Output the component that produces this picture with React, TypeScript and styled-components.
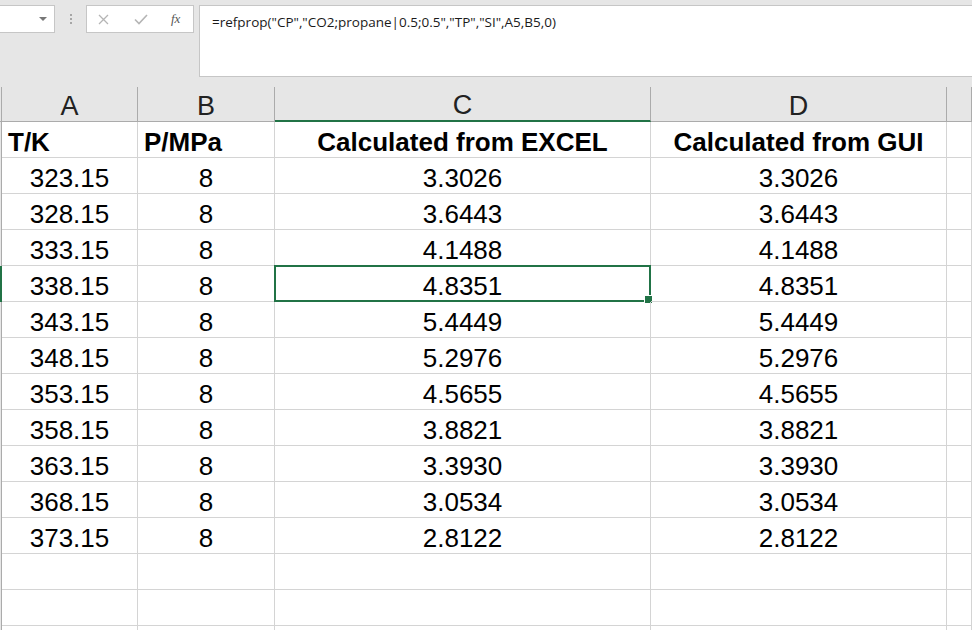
import React from "react";
import styled, { createGlobalStyle, css } from "styled-components";

const GlobalStyle = createGlobalStyle`
  html, body {
    margin: 0;
    padding: 0;
    background: #ffffff;
    overflow: hidden;
  }
  * {
    box-sizing: border-box;
  }
`;

const GRID_LINE = "#d4d4d4";
const HEADER_LINE = "#ababab";
const EXCEL_GREEN = "#217346";

const Window = styled.div`
  display: flex;
  flex-direction: column;
  height: 100vh;
  overflow: hidden;
`;

const FormulaBar = styled.div`
  display: flex;
  flex-direction: row;
  align-items: flex-start;
  flex-shrink: 0;
  height: 87px;
  padding-top: 5px;
  background: #e6e6e6;
`;

const NameBox = styled.div`
  display: flex;
  align-items: center;
  justify-content: flex-end;
  width: 55px;
  height: 28px;
  padding-right: 7px;
  background: #fff;
  border: 1px solid #c6c6c6;
  border-left: 0;
`;

const Caret = styled.span`
  width: 0;
  height: 0;
  border-left: 4px solid transparent;
  border-right: 4px solid transparent;
  border-top: 4px solid #777;
`;

const Grip = styled.div`
  display: flex;
  flex-direction: column;
  row-gap: 2px;
  margin: 9px 14px 0 15px;
  span {
    width: 2px;
    height: 2px;
    background: #a6a6a6;
  }
`;

const ButtonBox = styled.div`
  display: flex;
  align-items: center;
  width: 108px;
  height: 28px;
  padding-left: 11px;
  column-gap: 25px;
  background: #fff;
  border: 1px solid #c6c6c6;
`;

const Fx = styled.span`
  font-family: "Liberation Serif", serif;
  font-style: italic;
  font-size: 13px;
  color: #555;
  margin-left: -2px;
`;

const FormulaInput = styled.div`
  flex: 1;
  height: 72px;
  margin-left: 5px;
  padding: 7px 0 0 12px;
  background: #fff;
  border: 1px solid #c6c6c6;
  border-right: 0;
  font-family: "Open Sans", "Noto Sans", sans-serif;
  font-size: 13.5px;
  color: #1a1a1a;
  white-space: pre;
`;

const Sheet = styled.div`
  flex: 1;
  min-height: 0;
  overflow: hidden;
  display: grid;
  grid-template-columns: 2px 136px 137px 376px 296px 1fr;
  grid-auto-rows: 36px;
  grid-template-rows: 35px;
  align-content: start;
  font-family: "Liberation Sans", Arial, sans-serif;
`;

const RowHead = styled.div<{ $selected?: boolean; $top?: boolean }>`
  background: #e6e6e6;
  border-right: 1px solid ${HEADER_LINE};
  ${p => p.$top && css`border-bottom: 1px solid ${HEADER_LINE};`}
  ${p => p.$selected && css`background: ${EXCEL_GREEN}; border-right-color: ${EXCEL_GREEN};`}
`;

const ColHead = styled.div<{ $selected?: boolean }>`
  display: flex;
  align-items: flex-end;
  justify-content: center;
  background: #e6e6e6;
  border-right: 1px solid ${HEADER_LINE};
  border-bottom: 1px solid ${HEADER_LINE};
  font-size: 27px;
  line-height: 30px;
  color: #222;
  ${p => p.$selected && css`border-bottom: 2px solid ${EXCEL_GREEN};`}
`;

const Cell = styled.div<{ $align?: "left" | "center"; $bold?: boolean }>`
  position: relative;
  display: flex;
  align-items: flex-end;
  justify-content: ${p => (p.$align === "left" ? "flex-start" : "center")};
  padding: 0 0 0 ${p => (p.$align === "left" ? "6px" : "0")};
  border-right: 1px solid ${GRID_LINE};
  border-bottom: 1px solid ${GRID_LINE};
  font-size: 26px;
  font-weight: ${p => (p.$bold ? 700 : 400)};
  line-height: 30px;
  color: #000;
  white-space: nowrap;
`;

const Selection = styled.div`
  position: absolute;
  left: -1px;
  top: -1px;
  right: -1px;
  bottom: -1px;
  border: 2px solid ${EXCEL_GREEN};
  pointer-events: none;
  &::after {
    content: "";
    position: absolute;
    right: -4px;
    bottom: -4px;
    width: 7px;
    height: 7px;
    background: ${EXCEL_GREEN};
    border: 1px solid #fff;
  }
`;

const CloseIcon = () => (
  <svg width="11" height="11" viewBox="0 0 11 11">
    <path d="M1 1 L10 10 M10 1 L1 10" stroke="#b5b5b5" strokeWidth="1.3" fill="none" />
  </svg>
);

const CheckIcon = () => (
  <svg width="14" height="11" viewBox="0 0 14 11">
    <path d="M1 5.5 L5 9.5 L13 1" stroke="#b5b5b5" strokeWidth="1.6" fill="none" />
  </svg>
);

const data: [string, string][] = [
  ["323.15", "3.3026"],
  ["328.15", "3.6443"],
  ["333.15", "4.1488"],
  ["338.15", "4.8351"],
  ["343.15", "5.4449"],
  ["348.15", "5.2976"],
  ["353.15", "4.5655"],
  ["358.15", "3.8821"],
  ["363.15", "3.3930"],
  ["368.15", "3.0534"],
  ["373.15", "2.8122"],
];

const SELECTED_ROW = 3;

const App = () => {
  return (
    <Window>
      <GlobalStyle />
      <FormulaBar>
        <NameBox>
          <Caret />
        </NameBox>
        <Grip>
          <span />
          <span />
          <span />
        </Grip>
        <ButtonBox>
          <CloseIcon />
          <CheckIcon />
          <Fx>fx</Fx>
        </ButtonBox>
        <FormulaInput>=refprop("CP","CO2;propane|0.5;0.5","TP","SI",A5,B5,0)</FormulaInput>
      </FormulaBar>
      <Sheet>
        <RowHead $top />
        <ColHead>A</ColHead>
        <ColHead>B</ColHead>
        <ColHead $selected>C</ColHead>
        <ColHead>D</ColHead>
        <ColHead />

        <RowHead />
        <Cell $align="left" $bold>T/K</Cell>
        <Cell $align="left" $bold>P/MPa</Cell>
        <Cell $bold>Calculated from EXCEL</Cell>
        <Cell $bold>Calculated from GUI</Cell>
        <Cell />

        {data.map(([t, cp], i) => (
          <React.Fragment key={t}>
            <RowHead $selected={i === SELECTED_ROW} />
            <Cell>{t}</Cell>
            <Cell>8</Cell>
            <Cell>
              {cp}
              {i === SELECTED_ROW && <Selection />}
            </Cell>
            <Cell>{cp}</Cell>
            <Cell />
          </React.Fragment>
        ))}

        {[0, 1, 2].map(r => (
          <React.Fragment key={r}>
            <RowHead />
            <Cell />
            <Cell />
            <Cell />
            <Cell />
            <Cell />
          </React.Fragment>
        ))}
      </Sheet>
    </Window>
  );
};

export default App;
